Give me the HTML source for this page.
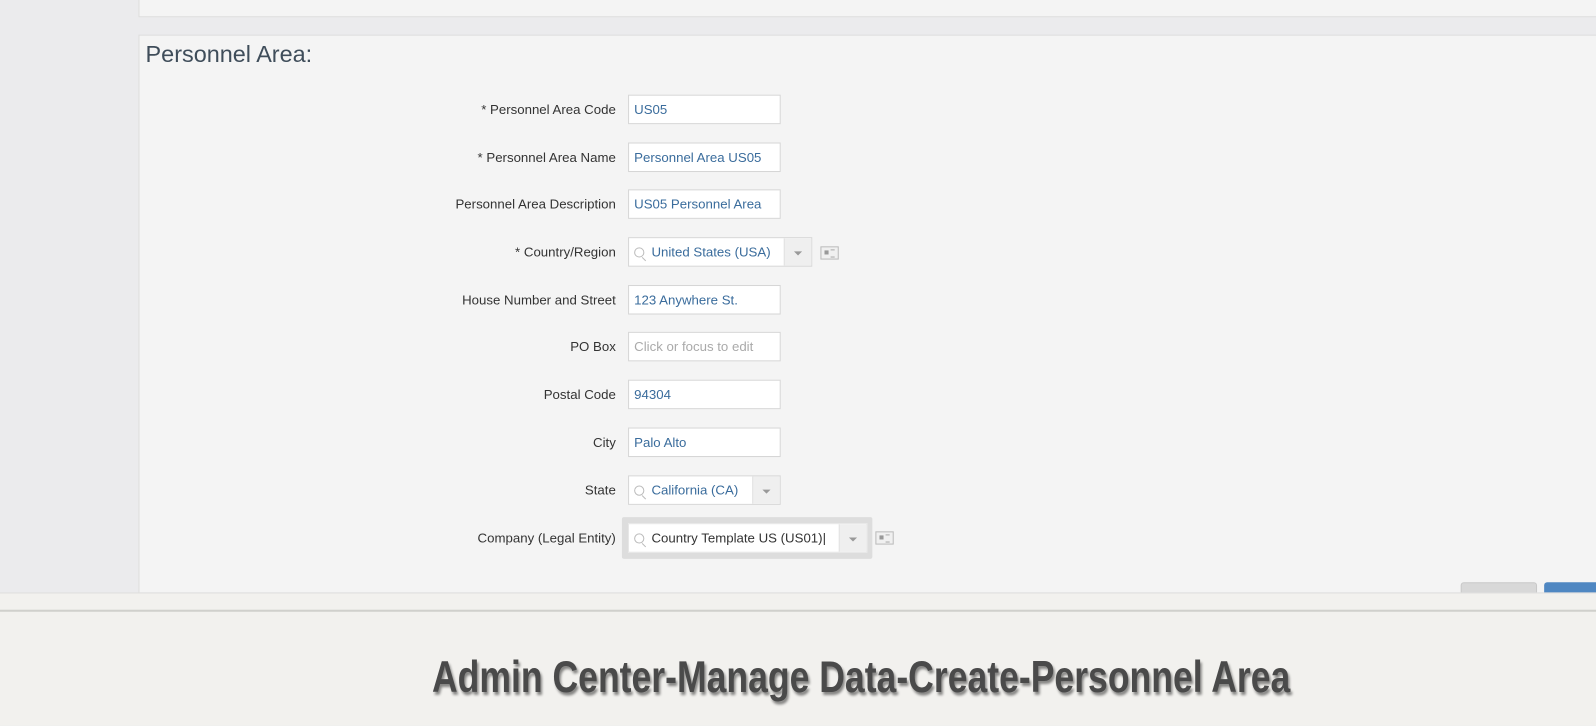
<!DOCTYPE html>
<html><head><meta charset="utf-8"><style>
body{margin:0;width:1596px;height:708px;overflow:hidden;background:#ebebed;font-family:"Liberation Sans",sans-serif;position:relative}
#w{position:absolute;left:0;top:0;width:1568px;height:696px;transform:scale(1.0179);transform-origin:0 0}
.p{position:absolute;background:#f4f4f4;border:1px solid #dcdcdc}
.lab{position:absolute;right:963px;font-size:13px;color:#333;line-height:29px;white-space:nowrap}
.in{position:absolute;left:617px;width:143px;height:27px;border:1px solid #d6d6d6;background:#fff;font-size:13px;color:#3a6c9c;line-height:27px;padding-left:5px;box-sizing:content-box;white-space:nowrap;overflow:hidden}
.arr{position:absolute;top:0;right:0;width:26px;height:100%;background:#efefef;border-left:1px solid #e2e2e2}
.arr:after{content:"";position:absolute;left:9px;top:13px;border:4px solid transparent;border-top:4px solid #999}
.mag{display:inline-block;width:8px;height:8px;border:1.3px solid #bbb;border-radius:50%;position:relative;margin-right:7px;vertical-align:-1px}
.mag:after{content:"";position:absolute;width:5px;height:1.3px;background:#bbb;transform:rotate(45deg);left:6px;top:10px}
.ic{position:absolute;width:16px;height:11px;border:1px solid #bbb;background:#f0f0f0}
.ic:before{content:"";position:absolute;left:3px;top:3px;width:4px;height:4px;background:#999}
.ic:after{content:"";position:absolute;left:9px;top:2px;width:4px;height:6px;border-top:1px solid #aaa;border-bottom:1px solid #aaa}
</style></head><body><div id="w">
<div class="p" style="left:136px;top:-2px;width:1480px;height:17px"></div>
<div class="p" style="left:136px;top:34px;width:1480px;height:560px"></div>
<div style="position:absolute;left:143px;top:40px;font-size:23px;color:#3f4d5a">Personnel Area:</div>

<div class="lab" style="top:93px">* Personnel Area Code</div><div class="in" style="top:93px">US05</div>
<div class="lab" style="top:140px">* Personnel Area Name</div><div class="in" style="top:140px">Personnel Area US05</div>
<div class="lab" style="top:186px">Personnel Area Description</div><div class="in" style="top:186px">US05 Personnel Area</div>
<div class="lab" style="top:233px">* Country/Region</div><div class="in" style="top:233px;width:174px"><span class="mag"></span>United States (USA)<div class="arr"></div></div><div class="ic" style="left:806px;top:242px"></div>
<div class="lab" style="top:280px">House Number and Street</div><div class="in" style="top:280px">123 Anywhere St.</div>
<div class="lab" style="top:326px">PO Box</div><div class="in" style="top:326px;color:#aaa">Click or focus to edit</div>
<div class="lab" style="top:373px">Postal Code</div><div class="in" style="top:373px">94304</div>
<div class="lab" style="top:420px">City</div><div class="in" style="top:420px">Palo Alto</div>
<div class="lab" style="top:467px">State</div><div class="in" style="top:467px"><span class="mag"></span>California (CA)<div class="arr"></div></div>
<div style="position:absolute;left:611px;top:508px;width:246px;height:41px;background:#ddd;border-radius:2px"></div>
<div class="lab" style="top:514px">Company (Legal Entity)</div><div class="in" style="top:514px;width:228px;color:#333;border-color:#e6e6e6"><span class="mag"></span>Country Template US (US01)|<div class="arr"></div></div><div class="ic" style="left:860px;top:522px"></div>

<div style="position:absolute;left:1435px;top:572px;width:73px;height:20px;background:#d8d8d8;border:1px solid #c8c8c8;border-radius:3px"></div>
<div style="position:absolute;left:1517px;top:572px;width:90px;height:20px;background:#4f87c2;border-radius:3px"></div>

<div style="position:absolute;left:0;top:582px;width:1600px;height:130px;background:#f2f1ee;border-top:1px solid #ddd"></div>
<div style="position:absolute;left:0;top:599px;width:1600px;height:2px;background:#d0d0cc"></div>
<div style="position:absolute;left:315px;top:640px;width:1000px;text-align:center;white-space:nowrap;line-height:51px">
<span style="display:inline-block;font-size:44px;font-weight:bold;color:#4a4a4a;text-shadow:2px 3px 3px rgba(0,0,0,.45);transform:scaleX(0.794);transform-origin:center">Admin Center-Manage Data-Create-Personnel Area</span></div>
</div></body></html>
